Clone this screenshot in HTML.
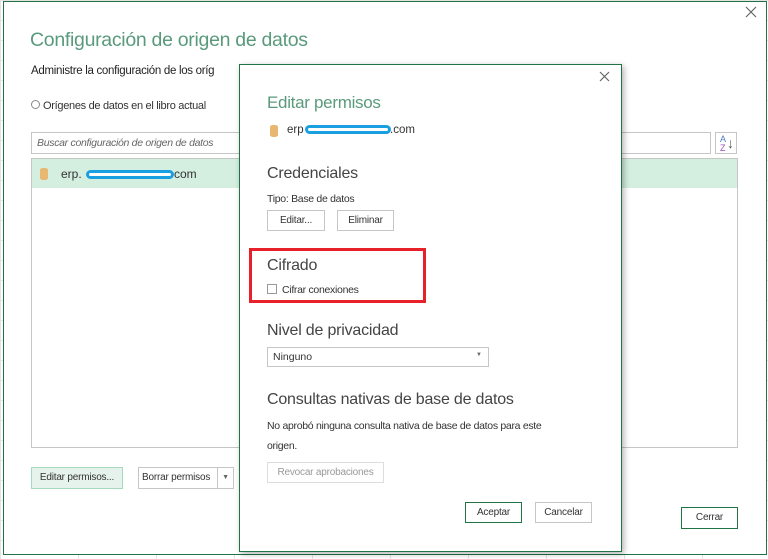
<!DOCTYPE html>
<html><head><meta charset="utf-8"><style>
*{box-sizing:border-box;margin:0;padding:0}
body{width:768px;height:559px;overflow:hidden;background:#fff;font-family:"Liberation Sans",sans-serif;font-size:11px;color:#333;position:relative}
.a{position:absolute}
.grid{position:absolute;left:0;top:0;width:768px;height:559px;background-image:linear-gradient(#e3e3e3 1px,transparent 1px),linear-gradient(90deg,#e3e3e3 1px,transparent 1px);background-size:78px 20px}
.outer{left:3px;top:1px;width:764px;height:554px;border:1px solid #217346;background:#fff}
.btn{position:absolute;border:1px solid #c6c6c6;background:#fff;font-size:10px;text-align:center;color:#333;letter-spacing:-0.2px}
.h{color:#444;font-size:16px;letter-spacing:-0.2px}
.blob{position:absolute;height:9px;border:3px solid #1a9fe0;border-radius:5px;background:#fff}
.db{position:absolute;width:8px;height:12px;background:#e8b870;border-radius:3px/2px}
.t{letter-spacing:-0.3px}
</style></head><body>
<div class="grid"></div>
<div class="a outer">
  <svg class="a" style="left:741px;top:4px" width="12" height="12"><path d="M1 1L11 11M11 1L1 11" stroke="#666" stroke-width="1.2"/></svg>
  <div class="a t" style="left:26px;top:27px;font-size:19.5px;color:#5a9a7c">Configuración de origen de datos</div>
  <div class="a t" style="left:27px;top:63px;font-size:11.5px;color:#222">Administre la configuración de los oríg</div>
  <div class="a t" style="left:27px;top:98px;font-size:11px;color:#333"><span style="display:inline-block;width:9px;height:9px;border:1px solid #888;border-radius:50%;margin-right:3px"></span>Orígenes de datos en el libro actual</div>
  <div class="a t" style="left:27px;top:130px;width:680px;height:22px;border:1px solid #c6c6c6;font-style:italic;color:#666;padding:4px 5px;font-size:10.5px">Buscar configuración de origen de datos</div>
  <div class="a" style="left:711px;top:130px;width:22px;height:22px;border:1px solid #c6c6c6;font-size:9px;line-height:9px;padding:2px 0 0 4px"><span style="color:#4d7cc2">A</span><br><span style="color:#9b4dc2">Z</span><span style="position:absolute;left:11px;top:2px;color:#555;font-size:14px;line-height:16px">↓</span></div>
  <div class="a" style="left:27px;top:156px;width:707px;height:290px;border:1px solid #c6c6c6"></div>
  <div class="a" style="left:28px;top:157px;width:705px;height:29px;background:#d4eee0"></div>
  <div class="db" style="left:36px;top:166px"></div>
  <div class="a" style="left:57px;top:165px;font-size:12px">erp.</div>
  <div class="blob" style="left:82px;top:168px;width:88px"></div>
  <div class="a" style="left:170px;top:165px;font-size:12px">com</div>
  <div class="btn" style="left:27px;top:465px;width:92px;height:22px;background:#e6f3ec;border-color:#a6d9bd;line-height:20px">Editar permisos...</div>
  <div class="btn" style="left:134px;top:465px;width:96px;height:22px;line-height:20px;text-align:left;padding-left:3px">Borrar permisos<span style="position:absolute;right:0;top:0;width:16px;height:20px;border-left:1px solid #c6c6c6;font-size:7px;text-align:center;color:#666">▼</span></div>
  <div class="btn" style="left:677px;top:505px;width:57px;height:22px;border-color:#217346;line-height:20px">Cerrar</div>
</div>
<div class="a" style="left:239px;top:64px;width:383px;height:488px;border:1px solid #217346;background:#fff;box-shadow:2px 2px 6px rgba(0,0,0,.3)">
  <svg class="a" style="left:359px;top:6px" width="11" height="11"><path d="M1 1L10 10M10 1L1 10" stroke="#666" stroke-width="1.2"/></svg>
  <div class="a t" style="left:27px;top:28px;font-size:17px;color:#5a9a7c">Editar permisos</div>
  <div class="db" style="left:30px;top:60px"></div>
  <div class="a" style="left:47px;top:59px;font-size:11.5px">erp</div>
  <div class="blob" style="left:65px;top:60px;width:86px"></div>
  <div class="a" style="left:150px;top:59px;font-size:11.5px">.com</div>
  <div class="a h" style="left:27px;top:100px">Credenciales</div>
  <div class="a t" style="left:27px;top:128px;font-size:10.5px">Tipo: Base de datos</div>
  <div class="btn" style="left:27px;top:145px;width:58px;height:21px;line-height:19px">Editar...</div>
  <div class="btn" style="left:97px;top:145px;width:57px;height:21px;line-height:19px">Eliminar</div>
  <div class="a" style="left:9px;top:183px;width:177px;height:55px;border:3px solid #e8202a"></div>
  <div class="a h" style="left:27px;top:192px">Cifrado</div>
  <div class="a t" style="left:27px;top:219px;font-size:10.5px"><span style="display:inline-block;width:10px;height:10px;border:1px solid #999;vertical-align:-1px;margin-right:5px"></span>Cifrar conexiones</div>
  <div class="a h" style="left:27px;top:257px">Nivel de privacidad</div>
  <div class="a" style="left:27px;top:282px;width:222px;height:20px;border:1px solid #c6c6c6;padding:3px 5px;font-size:10.5px">Ninguno<span style="position:absolute;right:6px;top:4px;font-size:6px;color:#666">▼</span></div>
  <div class="a h" style="left:27px;top:326px">Consultas nativas de base de datos</div>
  <div class="a t" style="left:27px;top:351px;font-size:10.5px;line-height:20px;width:300px">No aprobó ninguna consulta nativa de base de datos para este origen.</div>
  <div class="btn" style="left:27px;top:397px;width:117px;height:21px;line-height:19px;color:#999;border-color:#ddd">Revocar aprobaciones</div>
  <div class="btn" style="left:225px;top:437px;width:57px;height:21px;line-height:19px;border-color:#217346">Aceptar</div>
  <div class="btn" style="left:295px;top:437px;width:57px;height:21px;line-height:19px">Cancelar</div>
</div>
</body></html>
